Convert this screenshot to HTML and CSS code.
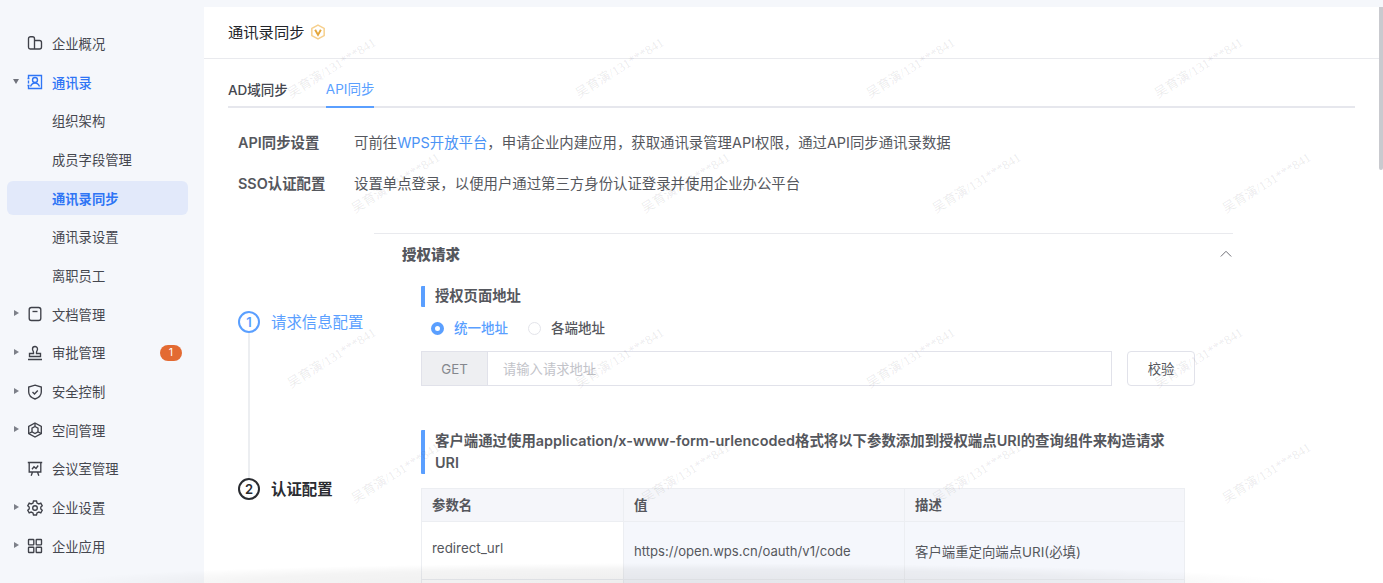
FILE: index.html
```html
<!DOCTYPE html>
<html lang="zh-CN">
<head>
<meta charset="utf-8">
<title>通讯录同步</title>
<link rel="stylesheet" href="styles.css">
</head>
<body>
<div class="page">
  <aside class="sidebar">
    <div class="item"><span class="caret"></span>
      <svg class="icon" viewBox="0 0 16 16"><path d="M7.5 14H3.2A1.7 1.7 0 0 1 1.500 12.300V3.700A2 2 0 0 1 3.500 1.700H5.500A2 2 0 0 1 7.500 3.700V14ZM7.500 5.500H12.500A2 2 0 0 1 14.500 7.500V12A2 2 0 0 1 12.500 14H7.500"/></svg>
      <span>企业概况</span></div>
    <div class="item blue"><span class="caret down"></span>
      <svg class="icon" viewBox="0 0 16 16"><path d="M1.500 4.500V1.500H14.500V14.500H1.500V11.500M1.500 6.500V9.500M.5 4.500H2.500M.5 11.500H2.500"/><circle cx="8" cy="6" r="2.500"/><path d="M3.500 12.500C4.500 10 6 9 8 9S11.500 10 12.500 12.500"/></svg>
      <span>通讯录</span></div>
    <div class="item sub">组织架构</div>
    <div class="item sub">成员字段管理</div>
    <div class="item sub active">通讯录同步</div>
    <div class="item sub">通讯录设置</div>
    <div class="item sub">离职员工</div>
    <div class="item"><span class="caret right"></span>
      <svg class="icon" viewBox="0 0 16 16"><rect x="2.200" y="1.500" width="11.600" height="13" rx="2.200"/><path d="M5.500 5.500H10.500"/></svg>
      <span>文档管理</span></div>
    <div class="item"><span class="caret right"></span>
      <svg class="icon" viewBox="0 0 16 16"><path d="M6.500 8.500V7.500C6.500 6 5.500 5.500 5.500 4A2.500 2.500 0 0 1 10.500 4C10.500 5.500 9.500 6 9.500 7.500V8.500H13.500V11.500H2.500V8.500H6.500ZM1 14.500H15"/></svg>
      <span>审批管理</span><span class="badge">1</span></div>
    <div class="item"><span class="caret right"></span>
      <svg class="icon" viewBox="0 0 16 16"><path d="M8 1.200L14.300 3V8C14.300 11.500 11.500 13.800 8 15C4.500 13.800 1.700 11.500 1.700 8V3L8 1.200Z"/><path d="M5.500 8L7.500 10L10.800 6.500"/></svg>
      <span>安全控制</span></div>
    <div class="item"><span class="caret right"></span>
      <svg class="icon" viewBox="0 0 16 16"><path d="M8 1L14.300 4.500V11.500L8 15L1.700 11.500V4.500L8 1Z"/><path d="M8 4.500L11 6.200V9.800L8 11.500L5 9.800V6.200L8 4.500ZM8 1V4.500M1.700 11.500L5 9.800M14.300 11.500L11 9.800"/></svg>
      <span>空间管理</span></div>
    <div class="item"><span class="caret"></span>
      <svg class="icon" viewBox="0 0 16 16"><path d="M.8 1.500H15.200M2.200 1.500V11H13.800V1.500M5.500 11L4.200 14.800M10.500 11L11.800 14.800M5 8.200L7 5.800L9 7.500L11.200 4.500"/></svg>
      <span>会议室管理</span></div>
    <div class="item"><span class="caret right"></span>
      <svg class="icon" viewBox="0 0 16 16"><path d="M6.500 1H9.500L10 3L11.900 3.900L13.800 3.200L15.300 5.800L13.800 7V9L15.300 10.200L13.800 12.800L11.900 12.100L10 13L9.500 15H6.500L6 13L4.100 12.100L2.200 12.800L.7 10.200L2.200 9V7L.7 5.800L2.200 3.200L4.100 3.900L6 3L6.500 1Z"/><circle cx="8" cy="8" r="2.300"/></svg>
      <span>企业设置</span></div>
    <div class="item"><span class="caret right"></span>
      <svg class="icon" viewBox="0 0 16 16"><rect x="1.500" y="1.500" width="5.300" height="5.300" rx=".6"/><rect x="9.200" y="1.500" width="5.300" height="5.300" rx=".6"/><rect x="1.500" y="9.200" width="5.300" height="5.300" rx=".6"/><rect x="9.200" y="9.200" width="5.300" height="5.300" rx=".6"/></svg>
      <span>企业应用</span></div>
  </aside>

  <main class="main">
    <header class="head">
      <h1 class="title">通讯录同步</h1>
      <svg class="vip" viewBox="0 0 14 14"><path d="M7 .9L12.400 3.900V10.100L7 13.100L1.600 10.100V3.900L7 .9Z"/><path class="vip-v" d="M4.500 5L7 9.500L9.500 5"/></svg>
    </header>
    <nav class="tabs">
      <span class="tab">AD域同步</span>
      <span class="tab current">API同步</span>
    </nav>
    <section class="intro">
      <div class="intro-row"><b class="intro-label">API同步设置</b><span>可前往<a class="link">WPS开放平台</a>，申请企业内建应用，获取通讯录管理API权限，通过API同步通讯录数据</span></div>
      <div class="intro-row"><b class="intro-label">SSO认证配置</b><span>设置单点登录，以便用户通过第三方身份认证登录并使用企业办公平台</span></div>
    </section>
    <section class="config">
      <div class="steps">
        <div class="step on"><span class="dot">1</span><span class="step-name">请求信息配置</span></div>
        <div class="step-line"></div>
        <div class="step done"><span class="dot">2</span><span class="step-name">认证配置</span></div>
      </div>
      <div class="panel">
        <div class="panel-head"><b>授权请求</b>
          <svg class="chevron" viewBox="0 0 12 8"><path d="M.8 6.500L6 1.300L11.200 6.500"/></svg>
        </div>
        <div class="panel-body">
          <div class="sub-title">授权页面地址</div>
          <div class="radios">
            <span class="radio checked"><i class="ring"></i>统一地址</span>
            <span class="radio"><i class="ring"></i>各端地址</span>
          </div>
          <div class="url-row">
            <div class="url-box"><span class="method">GET</span><span class="placeholder">请输入请求地址</span></div>
            <button class="check">校验</button>
          </div>
          <div class="sub-title long">客户端通过使用application/x-www-form-urlencoded格式将以下参数添加到授权端点URI的查询组件来构造请求URI</div>
          <table class="params">
            <thead><tr><th>参数名</th><th>值</th><th>描述</th></tr></thead>
            <tbody>
              <tr><td class="name"><span class="nudge">redirect_url</span></td><td class="tint url">https://open.wps.cn/oauth/v1/code</td><td class="tint">客户端重定向端点URI(必填)</td></tr>
              <tr><td class="name">&nbsp;</td><td class="tint">&nbsp;</td><td class="tint">&nbsp;</td></tr>
            </tbody>
          </table>
        </div>
      </div>
    </section>
  </main>

  <div class="watermarks" aria-hidden="true">
    <span class="wm x1 y1">吴育演/131***841</span><span class="wm x2 y1">吴育演/131***841</span><span class="wm x3 y1">吴育演/131***841</span><span class="wm x4 y1">吴育演/131***841</span>
    <span class="wm x5 y2">吴育演/131***841</span><span class="wm x6 y2">吴育演/131***841</span><span class="wm x7 y2">吴育演/131***841</span><span class="wm x8 y2">吴育演/131***841</span>
    <span class="wm x1 y3">吴育演/131***841</span><span class="wm x2 y3">吴育演/131***841</span><span class="wm x3 y3">吴育演/131***841</span><span class="wm x4 y3">吴育演/131***841</span>
    <span class="wm x5 y4">吴育演/131***841</span><span class="wm x6 y4">吴育演/131***841</span><span class="wm x7 y4">吴育演/131***841</span><span class="wm x8 y4">吴育演/131***841</span>
  </div>
  <div class="scroll-thumb"></div>
  <div class="bottom-fade"></div>
</div>
</body>
</html>
```
FILE: styles.css
```css
* { box-sizing: border-box; }
html, body { margin: 0; height: 100%; overflow: hidden; }
body {
  font-family: Inter, "Noto Sans CJK SC", sans-serif;
  font-size: 13.3px;
  color: #55575d;
  background: #f5f7fb;
}
.page { position: relative; display: flex; width: 1383px; height: 583px; overflow: hidden; }

/* sidebar */
.sidebar { width: 204px; flex: none; padding-top: 24px; color: #45474f; }
.item { display: flex; align-items: center; height: 38.7px; padding-left: 13px; position: relative; }
.item.blue { color: #2f75f5; font-weight: 500; }
.caret { width: 14px; height: 8px; flex: none; position: relative; }
.caret.down::before, .caret.right::before { content: ""; position: absolute; border-style: solid; border-color: transparent; }
.caret.down::before { left: 0; top: 1px; border-width: 5px 3.5px 0; border-top-color: #70737c; }
.caret.right::before { left: 1px; top: 0; border-width: 3.500px 0 3.500px 5px; border-left-color: #7d8089; }
.icon { width: 16px; height: 16px; flex: none; margin-right: 9px; fill: none; stroke: #3f4149; stroke-width: 1.350; }
.blue .icon { stroke: #2f75f5; }
.sub { padding-left: 52px; }
.sub.active {
  margin: 2px 16px 2px 7px;
  height: 34.7px;
  padding-left: 45px;
  border-radius: 6px;
  background: #e2e9fa;
  color: #2f75f5;
  font-weight: 600;
}
.badge {
  position: absolute;
  left: 160px;
  top: 11px;
  width: 22px;
  height: 16px;
  border-radius: 8px;
  background: #e36a32;
  color: #fff;
  font-size: 10.500px;
  line-height: 16px;
  text-align: center;
}

/* main */
.main { flex: 1; margin-top: 7px; background: #fff; min-width: 0; }
.head { display: flex; align-items: center; height: 52px; padding: 0 0 3px 24px; border-bottom: 1px solid #e9eaee; }
.title { margin: 0; font-size: 15.300px; font-weight: 400; color: #22242a; }
.vip { width: 16px; height: 16px; margin: 1px 0 0 5px; fill: none; stroke: #f6cf8c; stroke-width: 1.300; }
.vip-v { stroke: #e3a63c; stroke-width: 1.700; }
.tabs { display: flex; gap: 38px; height: 49px; margin: 0 28px 0 24px; border-bottom: 2px solid #e6e7ed; }
.tab { display: flex; align-items: center; height: 49px; padding-top: 10px; color: #45474f; font-size: 13.500px; font-weight: 500; }
.tab.current { color: #5a9fff; border-bottom: 2px solid #5a9fff; font-weight: 400; }

.intro { padding: 14px 0 0 34px; font-size: 14.400px; }
.intro-row { display: flex; align-items: center; height: 41px; padding-bottom: 2px; color: #55575d; }
.intro-label { width: 116px; flex: none; font-weight: 600; color: #55575d; }
.link { color: #4b93f5; }

.config { display: flex; margin-top: 29px; padding-left: 34px; }
.steps { width: 136px; flex: none; padding-top: 78px; }
.step { display: flex; align-items: center; gap: 11px; height: 22px; font-size: 15.400px; }
.step-name { margin-top: -2px; }
.step.on { color: #5a9fff; }
.step.done { color: #2a2c31; font-weight: 600; }
.dot {
  width: 22px;
  height: 22px;
  border-radius: 50%;
  border: 2px solid currentColor;
  display: flex;
  align-items: center;
  justify-content: center;
  font-size: 13px;
  font-weight: 600;
  line-height: 1;
}
.step-line { width: 2px; height: 145px; margin-left: 10px; background: #eceef1; }

.panel { width: 859px; flex: none; border-top: 1px solid #e9eaee; }
.panel-head { display: flex; align-items: center; justify-content: space-between; height: 43px; padding: 0 0 5px 28px; font-size: 14.500px; font-weight: 600; color: #55575d; }
.chevron { width: 12px; height: 8px; fill: none; stroke: #5d5f66; stroke-width: .9; margin: 2px 1px 0 0; }
.panel-body { padding: 9px 0 0 47px; }
.sub-title { border-left: 4px solid #5a9fff; padding-left: 10px; height: 21px; line-height: 19px; font-size: 14.300px; font-weight: 600; color: #55575d; border-radius: 1px; }
.sub-title.long { width: 756px; height: 44px; line-height: 22px; margin-top: 44px; font-size: 14.420px; }
.radios { display: flex; gap: 20px; align-items: center; height: 20px; margin: 11px 0 13px 10px; font-size: 13.500px; }
.radio { display: flex; align-items: center; gap: 10px; padding-bottom: 2px; font-weight: 500; color: #55575d; }
.radio.checked { color: #5a9fff; }
.ring { width: 13px; height: 13px; margin-top: 2px; border-radius: 50%; border: 1px solid #e3e4ea; background: #fff; }
.checked .ring { border: 4px solid #5a9fff; }
.url-row { display: flex; gap: 15px; }
.url-box { display: flex; width: 691px; height: 35px; border: 1px solid #e1e2ea; }
.method { width: 66px; display: flex; align-items: center; justify-content: center; background: #eeeff2; border-right: 1px solid #e1e2ea; color: #85878d; }
.placeholder { display: flex; align-items: center; padding-left: 15px; color: #c2c3c9; }
.check {
  width: 68px;
  height: 35px;
  border: 1px solid #e1e2ea;
  border-radius: 4px;
  background: #fff;
  font: inherit;
  color: #55575d;
}
.params { width: 764px; margin-top: 14px; border-collapse: collapse; table-layout: fixed; font-size: 13.400px; }
.params th, .params td { border: 1px solid #eceef2; padding: 0 10px; text-align: left; }
.params th { height: 33px; padding-bottom: 2px; background: #f5f6fa; font-weight: 600; color: #55575d; }
.params th:first-child { width: 202px; }
.params th:nth-child(2) { width: 281px; }
.params td { height: 58px; color: #55575d; }
.params .tint { background: #f5f7fc; }
.params .url { font-size: 13.100px; }
.nudge { position: relative; top: -3px; }

/* watermark layer */
.watermarks { position: absolute; inset: 0; pointer-events: none; }
.wm {
  position: absolute;
  transform: translate(-50%, -50%) rotate(-32deg);
  font-family: "Liberation Serif", "Noto Sans CJK SC", serif;
  font-size: 13px;
  white-space: nowrap;
  color: rgba(60, 60, 70, .1);
}
.x1 { left: 331px; } .x2 { left: 619px; } .x3 { left: 910px; } .x4 { left: 1198px; }
.x5 { left: 395px; } .x6 { left: 685px; } .x7 { left: 976px; } .x8 { left: 1266px; }
.y1 { top: 67px; } .y2 { top: 182px; } .y3 { top: 357px; } .y4 { top: 472px; }

.scroll-thumb { position: absolute; right: 0; top: 7px; width: 4px; height: 163px; background: #c9cacf; border-radius: 0 0 2px 2px; }
.bottom-fade {
  position: absolute;
  left: 60px;
  right: 90px;
  bottom: 0;
  height: 20px;
  pointer-events: none;
  background: radial-gradient(ellipse 50% 100% at 50% 100%, rgba(0,0,0,.07) 0, rgba(0,0,0,.045) 70%, rgba(0,0,0,0) 100%);
}
```
